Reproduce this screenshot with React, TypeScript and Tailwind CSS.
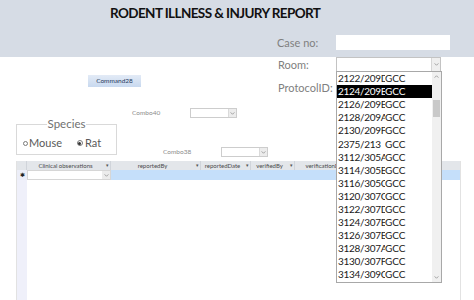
import React from "react";

const rooms: [string, string][] = [
  ["2122/209D", "GCC"],
  ["2124/209E", "GCC"],
  ["2126/209E", "GCC"],
  ["2128/209A", "GCC"],
  ["2130/209F", "GCC"],
  ["2375/213", "GCC"],
  ["3112/305A", "GCC"],
  ["3114/305E", "GCC"],
  ["3116/305C", "GCC"],
  ["3120/307C", "GCC"],
  ["3122/307D", "GCC"],
  ["3124/307E", "GCC"],
  ["3126/307E", "GCC"],
  ["3128/307A", "GCC"],
  ["3130/307F", "GCC"],
  ["3134/309C", "GCC"],
];

function Chevron({ up = false }: { up?: boolean }) {
  return (
    <svg viewBox="0 0 6 4" className="w-[5px] h-[3px]">
      <path
        d={up ? "M0.5 3.5 L3 1 L5.5 3.5" : "M0.5 0.5 L3 3 L5.5 0.5"}
        fill="none"
        stroke="#8a8a8a"
        strokeWidth="1"
      />
    </svg>
  );
}

function SmallCombo({ width }: { width: string }) {
  return (
    <div className={`${width} h-[10px] border border-[#cdcdcd] bg-white flex justify-end`}>
      <div className="w-[8px] h-full bg-[#ececec] border-l border-[#dadada] flex items-center justify-center">
        <Chevron />
      </div>
    </div>
  );
}

function HeaderCell({ label, width, arrow = true }: { label: string; width: string; arrow?: boolean }) {
  return (
    <div className={`${width} h-full flex items-center border-r border-[#d0d4da] overflow-hidden`}>
      <div className="flex-1 text-center text-[6px] leading-[9px] text-[#4a4a4a] whitespace-nowrap">{label}</div>
      {arrow && <div className="w-[6px] text-[5px] leading-[9px] text-[#555] text-center">▾</div>}
    </div>
  );
}

export default function App() {
  return (
    <div className="relative w-[474px] h-[300px] overflow-hidden bg-white font-['Lato',sans-serif] flex flex-col">
      {/* Header */}
      <div className="h-[57px] shrink-0 bg-[#d6dce5] flex flex-col">
        <div className="pl-[110px] pt-[5px] text-[13.5px] tracking-[-0.6px] leading-[17px] font-bold text-[#111]">
          RODENT ILLNESS &amp; INJURY REPORT
        </div>
        <div className="mt-[13px] flex items-center pl-[277px]">
          <div className="w-[59px] text-[11px] leading-[15px] text-[#808080]">Case no:</div>
          <div className="w-[114px] h-[15px] bg-white" />
        </div>
      </div>

      {/* Top section */}
      <div className="h-[104px] shrink-0 flex">
        {/* Left column */}
        <div className="w-[277px] flex flex-col">
          <div className="ml-[88px] mt-[18px] w-[53px] h-[12px] bg-gradient-to-b from-[#e3ebf6] to-[#c8d9ef] flex items-center justify-center text-[6.5px] text-[#243a5e]">
            Command28
          </div>
          <div className="mt-[21px] flex items-center h-[10px]">
            <div className="ml-[132px] w-[58px] text-[6.5px] text-[#8c8c8c]">Combo40</div>
            <SmallCombo width="w-[47px]" />
          </div>
          <div className="flex items-start">
            <fieldset className="ml-[16px] w-[101px] h-[37px] border border-[#d9d9d9] px-[6px]">
              <legend className="mx-auto px-[1px] text-[11.5px] leading-[12px] text-[#707070]">Species</legend>
              <div className="mt-[7px] flex items-center text-[11px] leading-[12px] text-[#595959]">
                <span className="w-[5px] h-[5px] rounded-full border border-[#7a7a7a] mr-[1px]" />
                <span>Mouse</span>
                <span className="ml-[15px] w-[6px] h-[6px] rounded-full border border-[#7a7a7a] flex items-center justify-center mr-[2px]">
                  <span className="w-[3px] h-[3px] rounded-full bg-[#333]" />
                </span>
                <span>Rat</span>
              </div>
            </fieldset>
            <div className="mt-[29px] flex items-center h-[10px]">
              <div className="ml-[46px] w-[58px] text-[6.5px] text-[#8c8c8c]">Combo38</div>
              <SmallCombo width="w-[47px]" />
            </div>
          </div>
        </div>

        {/* Right column */}
        <div className="flex-1 flex flex-col pl-[1px]">
          <div className="flex items-center h-[15px]">
            <div className="w-[58px] text-[11px] leading-[15px] text-[#808080]">Room:</div>
            <div className="relative w-[105px] h-[15px] border border-[#c3c3c3] bg-white flex justify-end">
              <div className="w-[9px] h-full bg-[#efefef] border-l border-[#d6d6d6] flex items-center justify-center">
                <Chevron />
              </div>
              {/* Dropdown list */}
              <div className="absolute left-[-1px] top-[13px] w-[106px] h-[212px] bg-white border border-[#a8a8a8] flex z-10">
                <div className="flex-1 flex flex-col">
                  {rooms.map(([a, b], i) => (
                    <div
                      key={a}
                      className={`h-[13.1px] flex items-center text-[10px] leading-[13px] ${
                        i === 1 ? "bg-black text-white" : "text-[#1a1a1a]"
                      }`}
                    >
                      <div className="w-[48px] shrink-0 pl-[1px] overflow-hidden whitespace-nowrap tracking-[-0.3px]">{a}</div>
                      <div className="whitespace-nowrap">{b}</div>
                    </div>
                  ))}
                </div>
                <div className="w-[9px] bg-[#f0f0f0] flex flex-col items-center">
                  <div className="h-[9px] flex items-center justify-center">
                    <Chevron up />
                  </div>
                  <div className="mt-[19px] w-[7px] h-[17px] bg-[#c9c9c9]" />
                  <div className="flex-1" />
                  <div className="h-[9px] flex items-center justify-center">
                    <Chevron />
                  </div>
                </div>
              </div>
            </div>
          </div>
          <div className="mt-[8px] flex items-center h-[15px]">
            <div className="w-[58px] text-[11px] leading-[15px] text-[#808080] whitespace-nowrap">ProtocolID:</div>
          </div>
        </div>
      </div>

      {/* Datasheet */}
      <div className="ml-[16px] w-[445px] flex-1 border-l border-r border-[#e2e2e2] flex flex-col">
        <div className="h-[9px] bg-[#e3e6ea] flex">
          <div className="w-[10px] h-full border-r border-[#d0d4da]" />
          <HeaderCell label="Clinical observations" width="w-[84px]" />
          <HeaderCell label="reportedBy" width="w-[90px]" />
          <HeaderCell label="reportedDate" width="w-[50px]" />
          <HeaderCell label="verifiedBy" width="w-[44px]" />
          <HeaderCell label="verificationDate" width="w-[70px]" />
          <div className="flex-1" />
        </div>
        <div className="h-[10px] flex">
          <div className="w-[10px] h-full bg-[#eceef8] flex items-center justify-center text-[6px] leading-[10px] text-[#222]">✱</div>
          <div className="w-[84px] h-full flex border border-[#d6d6d6] bg-white">
            <div className="flex-1" />
            <div className="w-[8px] h-full bg-[#ececec] flex items-center justify-center">
              <Chevron />
            </div>
          </div>
          <div className="flex-1 h-full bg-[#c5dffa]" />
        </div>
        <div className="flex-1 flex">
          <div className="w-[10px] h-full bg-[#eff0fa]" />
          <div className="flex-1" />
        </div>
      </div>
    </div>
  );
}
